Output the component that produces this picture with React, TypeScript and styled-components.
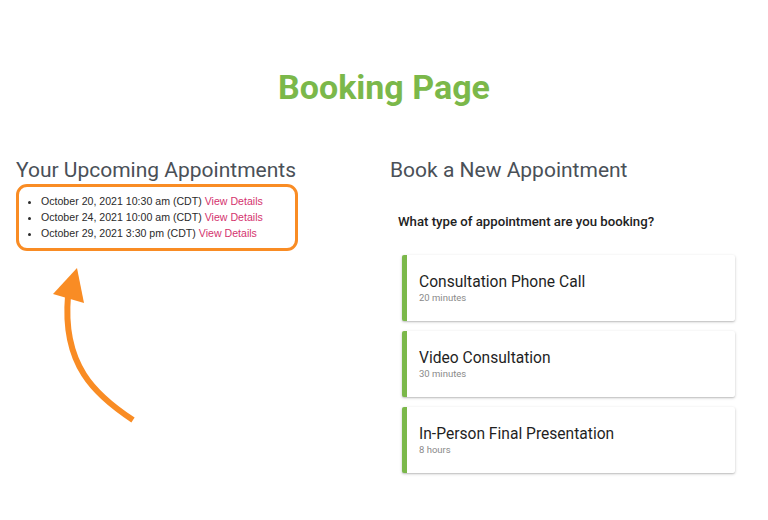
import React from "react";
import styled, { createGlobalStyle } from "styled-components";

const Global = createGlobalStyle`
  html, body { margin: 0; padding: 0; background: #ffffff; }
  body { font-family: Roboto, "Liberation Sans", sans-serif; }
  * { box-sizing: border-box; }
`;

const Page = styled.div`
  position: relative;
  width: 768px;
  height: 520px;
  overflow: hidden;
  background: #fff;
  padding-top: 67px;
`;

const Title = styled.h1`
  margin: 0;
  text-align: center;
  font-family: Roboto, "Liberation Sans", sans-serif;
  font-weight: 700;
  font-size: 34px;
  line-height: 40px;
  color: #7bb84a;
`;

const Columns = styled.div`
  display: grid;
  grid-template-columns: 358px 358px;
  column-gap: 16px;
  padding: 0 16px;
  margin-top: 49px;
`;

const Column = styled.section`
  display: flex;
  flex-direction: column;
`;

const Heading = styled.h2`
  margin: 0;
  font-family: Roboto, "Liberation Sans", sans-serif;
  font-weight: 400;
  font-size: 21px;
  line-height: 28px;
  color: #4a5057;
`;

const Highlight = styled.div`
  align-self: flex-start;
  margin-top: 0;
  width: 282px;
  height: 67px;
  border: 3px solid #f98c24;
  border-radius: 11px;
  padding: 6px 0 0 12px;
`;

const List = styled.ul`
  margin: 0;
  padding: 0 0 0 10px;
  font-family: "Liberation Sans", Arial, sans-serif;
  font-size: 10.6px;
  line-height: 16px;
  color: #2b2b2b;
`;

const Item = styled.li``;

const Link = styled.a`
  color: #d4336e;
  text-decoration: none;
`;

const Question = styled.p`
  margin: 29px 0 0 8px;
  font-family: Roboto, "Liberation Sans", sans-serif;
  font-weight: 500;
  font-size: 13.2px;
  line-height: 18px;
  color: #222;
`;

const Cards = styled.div`
  display: flex;
  flex-direction: column;
  gap: 10px;
  margin: 24px 13px 0 12px;
`;

const Card = styled.div`
  height: 66px;
  background: #fff;
  border-left: 5px solid #7bb84a;
  border-radius: 2px;
  box-shadow: 0 1px 3px rgba(0, 0, 0, 0.22), 0 1px 1px rgba(0, 0, 0, 0.08);
  padding: 17px 0 0 12px;
  display: flex;
  flex-direction: column;
`;

const CardTitle = styled.div`
  font-family: Roboto, "Liberation Sans", sans-serif;
  font-size: 15.6px;
  line-height: 20px;
  color: #1f1f1f;
`;

const CardSub = styled.div`
  margin-top: 0;
  font-family: Roboto, "Liberation Sans", sans-serif;
  font-size: 9.5px;
  line-height: 12px;
  color: #8a8a8a;
`;

const Arrow = styled.svg`
  position: absolute;
  left: 40px;
  top: 260px;
`;

const appointments = [
  "October 20, 2021 10:30 am (CDT)",
  "October 24, 2021 10:00 am (CDT)",
  "October 29, 2021 3:30 pm (CDT)",
];

const types = [
  { name: "Consultation Phone Call", dur: "20 minutes" },
  { name: "Video Consultation", dur: "30 minutes" },
  { name: "In-Person Final Presentation", dur: "8 hours" },
];

export default function App() {
  return (
    <>
      <Global />
      <Page>
        <Title>Booking Page</Title>
        <Columns>
          <Column>
            <Heading>Your Upcoming Appointments</Heading>
            <Highlight>
              <List>
                {appointments.map((a) => (
                  <Item key={a}>
                    {a} <Link href="#">View Details</Link>
                  </Item>
                ))}
              </List>
            </Highlight>
          </Column>
          <Column>
            <Heading>Book a New Appointment</Heading>
            <Question>What type of appointment are you booking?</Question>
            <Cards>
              {types.map((t) => (
                <Card key={t.name}>
                  <CardTitle>{t.name}</CardTitle>
                  <CardSub>{t.dur}</CardSub>
                </Card>
              ))}
            </Cards>
          </Column>
        </Columns>
        <Arrow width="110" height="170" viewBox="0 0 110 170">
          <path
            d="M93 160 C55 135 22 105 28 36"
            fill="none"
            stroke="#f98c24"
            strokeWidth="6"
          />
          <polygon points="37,8 13,34 44,43" fill="#f98c24" />
        </Arrow>
      </Page>
    </>
  );
}
